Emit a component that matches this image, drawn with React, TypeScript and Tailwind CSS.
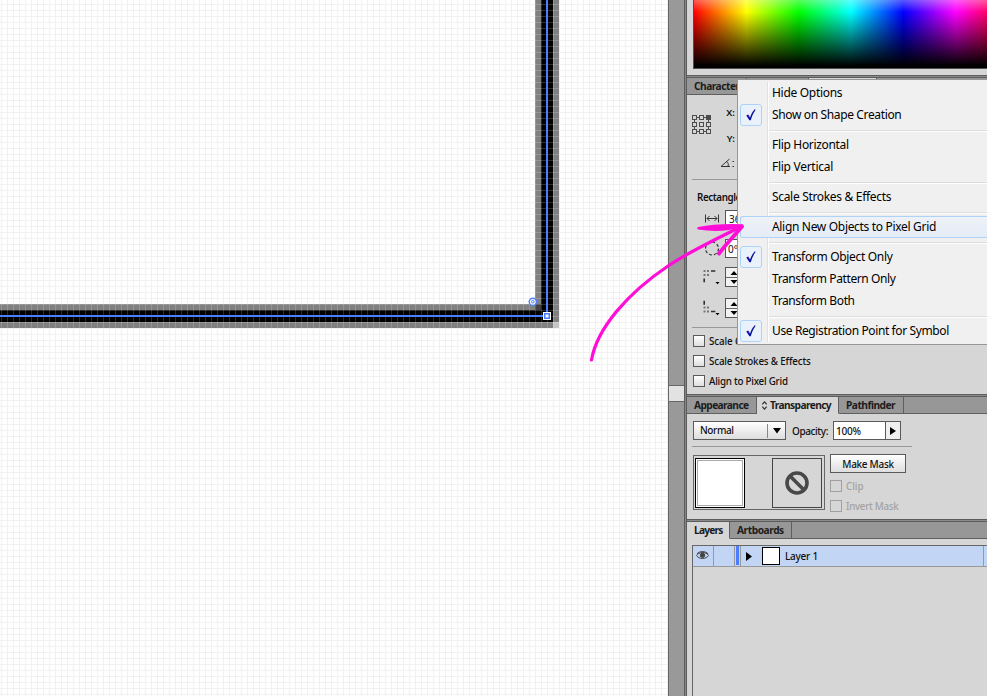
import { ReactNode } from "react";
import clsx from "clsx";

interface MenuEntry {
  label: string;
  checked?: boolean;
  active?: boolean;
  tracking?: string;
}

interface PanelTab {
  label: string;
  width: string;
  active?: boolean;
  arrows?: boolean;
  tracking?: string;
}

const menuGroups: MenuEntry[][] = [
  [
    { label: "Hide Options", tracking: "tracking-[-0.3px]" },
    { label: "Show on Shape Creation", checked: true, tracking: "tracking-[-0.36px]" },
  ],
  [{ label: "Flip Horizontal" }, { label: "Flip Vertical", tracking: "tracking-[-0.28px]" }],
  [{ label: "Scale Strokes & Effects" }],
  [{ label: "Align New Objects to Pixel Grid", active: true }],
  [
    { label: "Transform Object Only", checked: true },
    { label: "Transform Pattern Only", tracking: "tracking-[-0.4px]" },
    { label: "Transform Both", tracking: "tracking-[-0.4px]" },
  ],
  [{ label: "Use Registration Point for Symbol", checked: true, tracking: "tracking-[-0.38px]" }],
];

function Artboard() {
  return (
    <svg width="668" height="696" className="block shrink-0 bg-white" shapeRendering="crispEdges">
      <defs>
        <pattern id="grid" width="6" height="6" patternUnits="userSpaceOnUse">
          <rect x="1" width="1" height="6" fill="#f1f1f1" />
          <rect y="4" width="6" height="1" fill="#f1f1f1" />
        </pattern>
        <pattern id="gridOver" width="6" height="6" patternUnits="userSpaceOnUse">
          <rect x="1" width="1" height="6" fill="#ffffff" fillOpacity="0.16" />
          <rect y="4" width="6" height="1" fill="#ffffff" fillOpacity="0.18" />
        </pattern>
      </defs>
      <rect width="668" height="696" fill="url(#grid)" />
      <path d="M535 0H559V328H0V304H535Z" fill="#808080" />
      <rect x="553" y="322" width="6" height="6" fill="#c4c4c4" />
      <rect x="535" y="304" width="6" height="6" fill="#404040" />
      <path d="M541 0H553V322H0V310H541Z" fill="#000" />
      <path d="M535 0H559V328H0V304H535Z" fill="url(#gridOver)" />
      <path d="M546 0H548V317H0V315H546Z" fill="#4a7dff" />
      <rect x="543" y="312" width="8" height="8" fill="#fff" />
      <rect x="544" y="313" width="6" height="6" fill="#4a7dff" />
      <rect x="545.5" y="314.5" width="3" height="3" fill="#fff" shapeRendering="auto" />
      <g shapeRendering="auto">
        <circle cx="532.8" cy="301.8" r="3.6" fill="#fff" stroke="#4a7dff" strokeWidth="1.4" />
        <circle cx="532.8" cy="301.8" r="1.3" fill="#fff" stroke="#4a7dff" />
      </g>
    </svg>
  );
}

function TabBar({ tabs }: { tabs: PanelTab[] }) {
  return (
    <div className="flex h-[17px] shrink-0 bg-[#979797]">
      {tabs.map((tab, index) => (
        <div
          key={index}
          className={clsx(
            "flex shrink-0 items-center gap-[3px] whitespace-nowrap border-b border-r border-r-[#5f5f5f] text-[10.2px] font-bold leading-4 text-[#1c1c1c]",
            tab.width,
            tab.tracking,
            tab.arrows ? "pl-[5px]" : "pl-[7px]",
            tab.active ? "border-b-[#d6d6d6] bg-[#d6d6d6]" : "border-b-[#5f5f5f] bg-[#979797]"
          )}
        >
          {tab.arrows ? (
            <svg width="5" height="9" viewBox="0 0 5 9" fill="none" stroke="#333" strokeWidth="1.2">
              <path d="M0.3 3.3L2.5 0.9L4.7 3.3M0.3 5.7L2.5 8.1L4.7 5.7" />
            </svg>
          ) : null}
          {tab.label}
        </div>
      ))}
      <div className="flex-1 border-b border-[#5f5f5f]" />
    </div>
  );
}

function Divider() {
  return <div className="h-[3px] shrink-0 border-y border-[#5c5c5c] bg-[#8a8a8a]" />;
}

function CheckRow({ label, disabled, className }: { label: string; disabled?: boolean; className?: string }) {
  return (
    <div
      className={clsx(
        "flex h-5 items-center gap-1 whitespace-nowrap text-[9.8px] font-medium",
        disabled ? "text-[#a3a3a3]" : "text-[#111]",
        className
      )}
    >
      <span
        className={clsx(
          "size-3 shrink-0 border",
          disabled ? "border-[#a0a0a0] bg-[#d6d6d6]" : "border-[#5a5a5a] bg-linear-to-b from-white to-[#dedede]"
        )}
      />
      <span className="pt-[3px]">{label}</span>
    </div>
  );
}

function Spinner() {
  return (
    <div className="flex h-5 w-4 flex-col border border-[#555] bg-[#f2f2f2]">
      <svg width="16" height="18" viewBox="0 0 16 18" className="shrink-0">
        <path d="M0 9.5H16" stroke="#666" />
        <path d="M4.5 7L8 3L11.5 7ZM4.5 12H11.5L8 16Z" fill="#000" />
      </svg>
    </div>
  );
}

function ReferencePoint() {
  const spots = [0, 7, 14];
  return (
    <svg width="20" height="20" viewBox="0 0 20 20" fill="none" stroke="#4d4d4d" shapeRendering="crispEdges">
      <path d="M5 2.5H14M5 16.5H14M2.5 5V14M16.5 5V14" />
      {spots.map((y) =>
        spots.map((x) => (
          <rect
            key={`${x}-${y}`}
            x={x + 0.5}
            y={y + 0.5}
            width="4"
            height="4"
            fill={x === 14 && y === 0 ? "#4d4d4d" : "#d6d6d6"}
          />
        ))
      )}
    </svg>
  );
}

function ColorPanel() {
  return (
    <div className="h-[75px] shrink-0 bg-[#d6d6d6] pl-1.5">
      <div className="h-[69px] overflow-hidden border-b border-l border-[#4f4f4f]">
        <div className="h-[68px] w-[314px] bg-[linear-gradient(to_right,#f00,#ff0,#0f0,#0ff,#00f,#f0f,#f00)]">
          <div className="h-full bg-[linear-gradient(to_bottom,rgba(255,255,255,.34)_0px,rgba(255,255,255,0)_12px,rgba(0,0,0,0)_12px,#000_66px)]" />
        </div>
      </div>
    </div>
  );
}

function TransformPanel() {
  return (
    <div className="h-[299px] shrink-0 bg-[#d6d6d6] pl-[5px] text-[10px] text-[#111]">
      <div className="flex h-[84px]">
        <div className="w-5 pt-5">
          <ReferencePoint />
        </div>
        <div className="flex w-[23px] flex-col items-end pt-[5px] text-[9.5px] font-semibold">
          <span className="h-[26px] leading-[26px]">X:</span>
          <span className="h-[26px] leading-[26px]">Y:</span>
          <svg width="15" height="10" viewBox="0 0 15 10" className="mt-1.5" fill="none" stroke="#333">
            <path d="M9.5 1L1 8.5H10M6.5 3.5C8.5 4.5 8.5 6.5 8 8.5" />
            <path d="M12.5 3.5H14M12.5 8.5H14" />
          </svg>
        </div>
      </div>
      <div className="h-px bg-[#999]" />
      <div className="h-[30px] pl-[5px] pt-2.5 text-[9.8px] font-semibold leading-4 tracking-[-0.4px]">Rectangle</div>
      <div className="flex h-[29px] items-start pl-3">
        <svg width="16" height="9" viewBox="0 0 16 9" className="mt-1 shrink-0" fill="none" stroke="#333">
          <path d="M1.5 0.5V8.5M14.5 0.5V8.5M3 4.5H13M5.5 2L3 4.5L5.5 7M10.5 2L13 4.5L10.5 7" />
        </svg>
        <div className="ml-[5px] h-[18px] w-16 border border-[#555] bg-white pl-[3px] text-[10px] leading-[17px]">36</div>
      </div>
      <div className="flex h-7 items-start pl-3">
        <svg width="16" height="16" viewBox="0 0 16 16" className="mt-0.5 shrink-0" fill="none" stroke="#333">
          <circle cx="8" cy="7.5" r="6.5" strokeDasharray="3 2" strokeWidth="1.2" />
        </svg>
        <div className="ml-[5px] h-[19px] w-16 border border-[#555] bg-white pl-0.5 text-[10px] leading-[18px]">0°</div>
      </div>
      <div className="flex h-[31px] pl-2.5">
        <svg width="18" height="18" viewBox="0 0 18 18" className="mt-0.5">
          <path d="M1.5 2H3.5M5 2H7M1.5 6H3.5M5 6H7" stroke="#777" strokeWidth="1.8" />
          <path d="M9 2H13.3M2.2 9.5V13.3" stroke="#2f2f2f" strokeWidth="1.6" />
          <path d="M13.5 13H17.5L15.5 15.2Z" fill="#000" />
        </svg>
        <div className="ml-[5px]">
          <Spinner />
        </div>
      </div>
      <div className="flex h-[29px] pl-2.5">
        <svg width="18" height="18" viewBox="0 0 18 18" className="mt-0.5">
          <path d="M1.5 7.5H3.5M5 7.5H7M1.5 11.5H3.5M5 11.5H7" stroke="#777" strokeWidth="1.8" />
          <path d="M9 11.5H13.3M2.2 0.8V4.8" stroke="#2f2f2f" strokeWidth="1.6" />
          <path d="M13.5 13H17.5L15.5 15.2Z" fill="#000" />
        </svg>
        <div className="ml-[5px]">
          <Spinner />
        </div>
      </div>
      <div className="mb-[3px] h-px bg-[#999]" />
      <div className="pl-px">
        <CheckRow label="Scale C" className="tracking-[-0.12px]" />
        <CheckRow label="Scale Strokes & Effects" className="tracking-[-0.16px]" />
        <CheckRow label="Align to Pixel Grid" className="tracking-[-0.24px]" />
      </div>
    </div>
  );
}

function TransparencyPanel() {
  return (
    <div className="h-[105px] shrink-0 bg-[#d6d6d6] pl-[5px] pt-[7px] text-[10px] font-medium text-[#111]">
      <div className="flex h-[25px] items-start pl-px">
        <div className="flex h-[19px] w-[93px] items-center border border-[#5a5a5a] bg-linear-to-b from-white to-[#dedede] pl-1.5">
          <span className="w-[67px] tracking-[-0.4px]">Normal</span>
          <span className="h-3.5 w-px bg-[#888]" />
          <svg width="8" height="6" viewBox="0 0 8 6" className="ml-[5px]">
            <path d="M0 0H8L4 5.5Z" fill="#000" />
          </svg>
        </div>
        <span className="ml-1.5 w-[41px] leading-[21px] tracking-[-0.4px]">Opacity:</span>
        <div className="flex h-[19px] w-[68px] border border-[#5a5a5a] bg-white">
          <span className="w-[51px] pl-0.5 leading-[18px] tracking-[-0.2px]">100%</span>
          <span className="flex flex-1 items-center justify-center border-l border-[#5a5a5a] bg-[#efefef]">
            <svg width="6" height="8" viewBox="0 0 6 8">
              <path d="M0 0L6 4L0 8Z" fill="#000" />
            </svg>
          </span>
        </div>
      </div>
      <div className="h-px w-[220px] bg-[#999]" />
      <div className="flex items-start pl-px pt-[7px]">
        <div className="mt-px flex h-[55px] w-[132px] justify-between border border-[#666] pl-px pr-0.5 pt-0.5">
          <div className="size-[50px] border border-black bg-white p-px">
            <div className="size-full border border-[#aaa]" />
          </div>
          <div className="flex size-[50px] items-center justify-center border border-[#444]">
            <svg width="24" height="24" viewBox="0 0 24 24" fill="none" stroke="#484848" strokeWidth="3.6">
              <circle cx="12" cy="12" r="10" />
              <path d="M5 5L19 19" />
            </svg>
          </div>
        </div>
        <div className="ml-[5px]">
          <div className="mb-[3px] h-[19px] w-[76px] border border-[#5a5a5a] bg-linear-to-b from-white to-[#dedede] text-center leading-[19px] tracking-[-0.3px]">
            Make Mask
          </div>
          <CheckRow label="Clip" disabled />
          <CheckRow label="Invert Mask" disabled className="tracking-[-0.3px]" />
        </div>
      </div>
    </div>
  );
}

function LayersPanel() {
  return (
    <div className="flex-1 bg-[#d6d6d6] pl-[5px] pt-1.5">
      <div className="h-full border-l border-t border-[#666]">
        <div className="flex h-[21px] border-b border-[#999] bg-[#c2d5f5]">
          <div className="w-[21px] border-r border-[#999] pl-[3px] pt-[5px]">
            <svg width="13" height="9" viewBox="0 0 13 9" fill="none" stroke="#444">
              <path d="M0.5 4.5C2.5 1 10 0 12.5 4.5C10 8.5 3 8.5 0.5 4.5Z" />
              <circle cx="6.5" cy="4.3" r="2.2" fill="#444" />
              <path d="M1 2.8C3.5 -0.2 9.5 -0.2 12 2.8" />
            </svg>
          </div>
          <div className="w-[21px] border-r border-[#999]" />
          <div className="ml-px h-[19px] w-[3px] bg-[#4a7dff]" />
          <div className="ml-px w-px bg-[#999]" />
          <svg width="6" height="9" viewBox="0 0 6 9" className="ml-[5px] mt-1.5">
            <path d="M0 0L6 4.5L0 9Z" fill="#000" />
          </svg>
          <div className="ml-2.5 mt-px size-[18px] border border-black bg-white" />
          <div className="ml-[5px] w-[199px] border-r border-[#999] text-[10px] font-medium leading-[21px] tracking-[-0.25px] text-[#111]">
            Layer 1
          </div>
        </div>
      </div>
    </div>
  );
}

function MenuRow({ entry }: { entry: MenuEntry }) {
  return (
    <div
      className={clsx(
        "relative flex h-[22px] items-center whitespace-nowrap",
        entry.active &&
          "rounded-l-[3px] shadow-[inset_1px_1px_0_#aed3f8,inset_0_-1px_0_#aed3f8] bg-linear-to-b from-[#eff2f7] to-[#e4ecf7]"
      )}
    >
      <span
        className={clsx(
          "flex size-[22px] shrink-0 items-center justify-center rounded-[3px]",
          entry.checked && "border border-[#aed3f8] bg-[#e9f1fa]"
        )}
      >
        {entry.checked ? (
          <svg width="10" height="12" viewBox="0 0 10 12" fill="#0c12a1">
            <path d="M0.3 6.6L2.2 5.6L4 8.6C5 5.5 6.6 2.5 8.8 0.3L9.6 0.8C7.4 4 5.8 7.4 4.8 11.3H3.4Z" />
          </svg>
        ) : null}
      </span>
      <span className={clsx("ml-2.5", entry.tracking ?? "tracking-[-0.32px]")}>{entry.label}</span>
    </div>
  );
}

function FlyoutMenu() {
  return (
    <div className="absolute left-[737px] top-[79px] flex h-[266px] w-[250px] flex-col border-b border-l border-t border-[#979797] bg-[#f0f0f0] pl-0.5 pt-0.5 text-[12px] text-black">
      <div className="absolute bottom-0.5 left-[29px] top-0.5 w-0.5 border-l border-[#e0e0e0] bg-white" />
      {menuGroups.map((group, index) => (
        <div key={group[0].label}>
          {index > 0 ? <div className="mb-0.5 ml-7 mt-1 h-0.5 border-t border-[#dcdcdc] bg-white" /> : null}
          {group.map((entry) => (
            <MenuRow key={entry.label} entry={entry} />
          ))}
        </div>
      ))}
    </div>
  );
}

function PointerArrow() {
  return (
    <svg
      width="170"
      height="150"
      viewBox="585 215 170 150"
      className="pointer-events-none absolute left-[585px] top-[215px]"
      fill="none"
      stroke="#ff0ed8"
      strokeLinecap="round"
      strokeLinejoin="round"
    >
      <path d="M591.5 360C597 328 628 293 668 266C690 251 719 238 741 226.5" strokeWidth="3.2" />
      <path d="M698.5 228.2C712 225.5 727 225 742 225.5C728 230 712 230.5 698.5 228.2Z" strokeWidth="2.6" fill="#ff0ed8" />
      <path d="M742 226.5C735 235 727 243 719 253.5" strokeWidth="3.8" />
    </svg>
  );
}

function PanelDock({ children }: { children: ReactNode }) {
  return <div className="flex h-full w-[300px] shrink-0 flex-col overflow-hidden">{children}</div>;
}

export default function App() {
  return (
    <div className="relative flex h-[696px] w-[987px] overflow-hidden bg-white font-['Noto_Sans','Open_Sans',sans-serif]">
      <Artboard />
      <div className="flex w-[19px] shrink-0 border-l border-[#666] bg-[#999]">
        <div className="w-[15px] pt-[385px]">
          <div className="h-[17px] border-y border-[#666] bg-[#e2e2e2]" />
        </div>
        <div className="w-[3px] border-x border-[#5c5c5c] bg-[#858585]" />
      </div>
      <PanelDock>
        <ColorPanel />
        <Divider />
        <TabBar
          tabs={[
            { label: "Character", width: "w-[60px]", tracking: "tracking-[-0.5px]" },
            { label: "", width: "w-[62px]" },
            { label: "", width: "w-[68px]", active: true },
          ]}
        />
        <TransformPanel />
        <Divider />
        <TabBar
          tabs={[
            { label: "Appearance", width: "w-[70px]", tracking: "tracking-[-0.6px]" },
            { label: "Transparency", width: "w-[82px]", active: true, arrows: true, tracking: "tracking-[-0.6px]" },
            { label: "Pathfinder", width: "w-[65px]", tracking: "tracking-[-0.5px]" },
          ]}
        />
        <TransparencyPanel />
        <Divider />
        <TabBar
          tabs={[
            { label: "Layers", width: "w-[43px]", active: true, tracking: "tracking-[-0.8px]" },
            { label: "Artboards", width: "w-[62px]", tracking: "tracking-[-0.45px]" },
          ]}
        />
        <LayersPanel />
      </PanelDock>
      <FlyoutMenu />
      <PointerArrow />
    </div>
  );
}
